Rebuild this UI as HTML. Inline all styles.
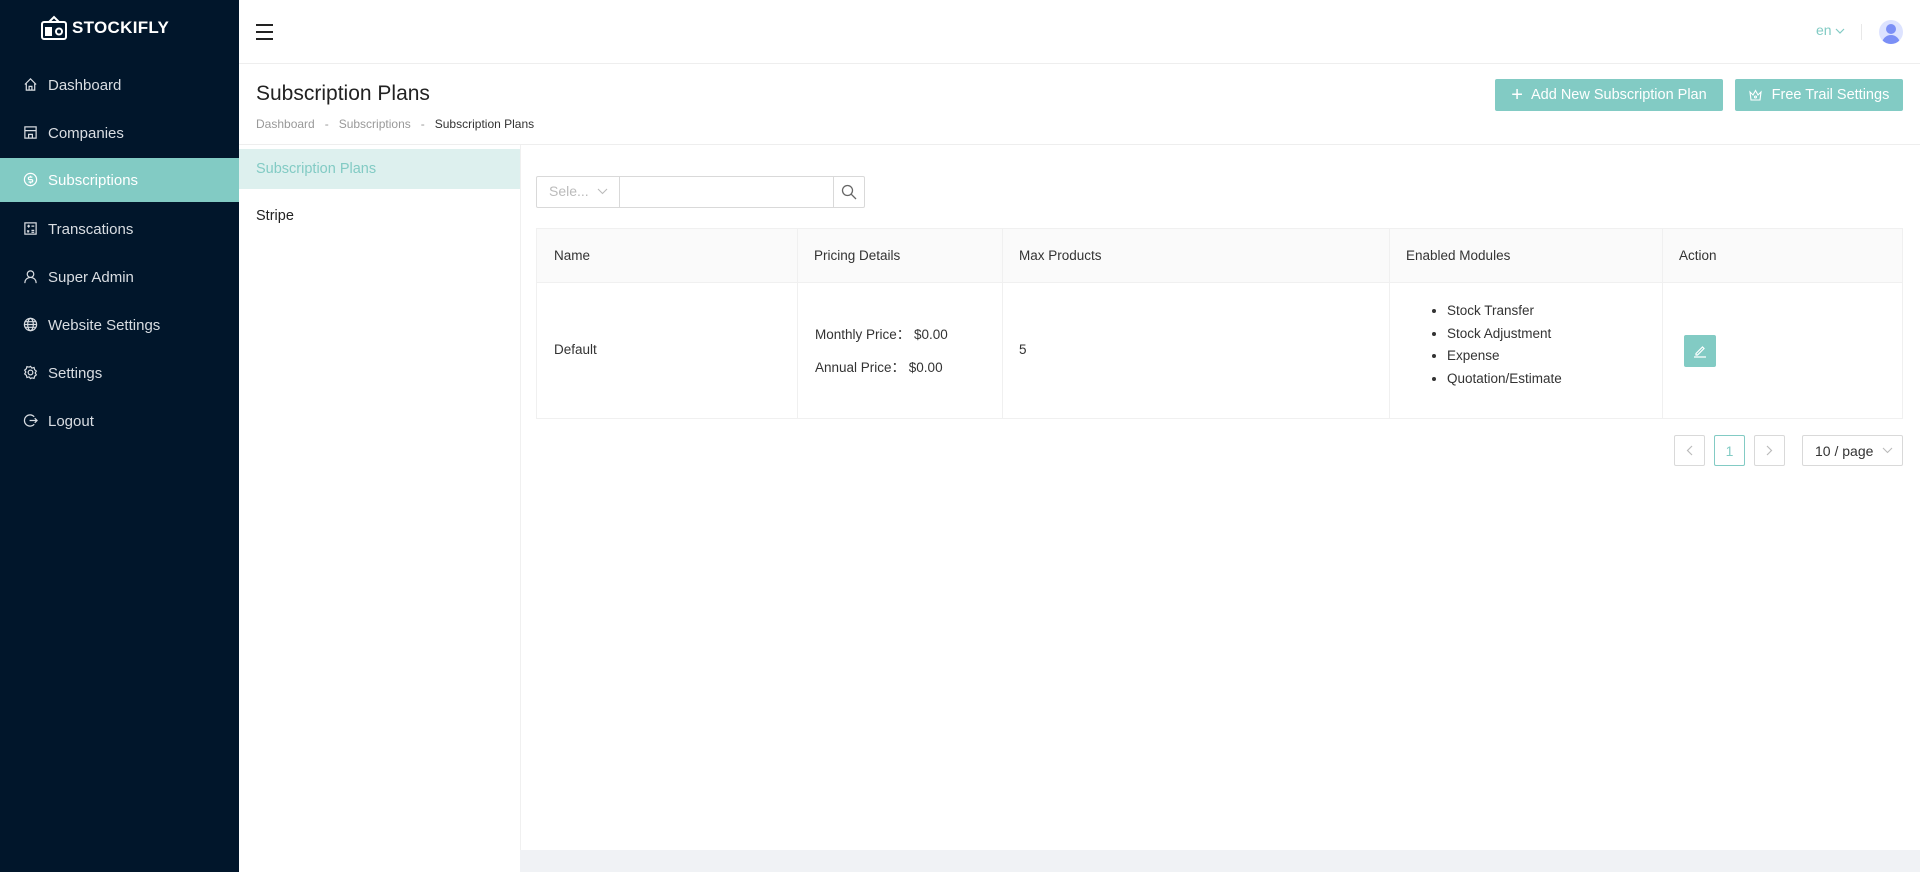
<!DOCTYPE html>
<html><head><meta charset="utf-8"><style>
*{box-sizing:border-box;margin:0;padding:0}
body{width:1920px;height:872px;position:relative;overflow:hidden;font-family:"Liberation Sans",sans-serif;color:#333;background:#fff;font-size:14px}
.a{position:absolute}
#sb{left:0;top:0;width:239px;height:872px;background:#01162b}
.mi{position:absolute;left:0;width:239px;height:46px;color:#d9dde2;font-size:15px;display:flex;align-items:center;padding-left:48px}
.mi svg{position:absolute;left:23px;top:15px}
.mi.act{background:#82cbc4;color:#fff}
.th{position:absolute;top:0;height:54px;line-height:54px;color:#333;font-size:13.5px}
.td{position:absolute;color:#333;font-size:13.5px}
.pg{position:absolute;top:435px;height:31px;border:1px solid #d9d9d9;border-radius:2px;display:flex;align-items:center;justify-content:center;color:#999;font-size:14px}
</style></head><body>
<div id="sb" class="a">
 <div class="a" style="left:40px;top:15px;width:28px;height:26px">
  <svg width="28" height="26" viewBox="0 0 28 26" fill="none" stroke="#fff" stroke-width="2"><rect x="2" y="7" width="24" height="17" rx="2"/><path d="M9 7l5-5 5 5"/><rect x="6" y="13" width="5" height="7" fill="#fff"/><circle cx="19" cy="16.5" r="3"/></svg>
 </div>
 <div class="a" style="left:72px;top:18px;color:#fff;font-weight:bold;font-size:17px;letter-spacing:0.3px">STOCKIFLY</div>
 <div class="mi" style="top:62px"><svg width="15" height="15" viewBox="0 0 16 16" fill="none" stroke="#d9dde2" stroke-width="1.3"><path d="M2 8L8 2l6 6M3.5 7v7h9V7M6.5 14v-4h3v4"/></svg>Dashboard</div>
 <div class="mi" style="top:110px"><svg width="15" height="15" viewBox="0 0 16 16" fill="none" stroke="#d9dde2" stroke-width="1.3"><rect x="2" y="2" width="12" height="12"/><path d="M2 6h12M6 14v-4h4v4"/></svg>Companies</div>
 <div class="mi act" style="top:158px;height:44px"><svg width="15" height="15" viewBox="0 0 16 16" fill="none" stroke="#fff" stroke-width="1.3" style="top:14px"><circle cx="8" cy="8" r="6.5"/><path d="M10 5.5H7a1.3 1.3 0 000 2.6h2a1.3 1.3 0 010 2.6H6M8 4v1.5M8 10.7v1.5"/></svg>Subscriptions</div>
 <div class="mi" style="top:206px"><svg width="15" height="15" viewBox="0 0 16 16" fill="none" stroke="#d9dde2" stroke-width="1.3"><rect x="2" y="2" width="12" height="12"/><path d="M4.5 5.5h3M6 4v3M9 5.5h3M4.5 10l2 2M6.5 10l-2 2M9 10h3M9 12h3"/></svg>Transcations</div>
 <div class="mi" style="top:254px"><svg width="15" height="15" viewBox="0 0 16 16" fill="none" stroke="#d9dde2" stroke-width="1.3"><circle cx="8" cy="5.5" r="3.5"/><path d="M2 15c0-4 3-6 6-6s6 2 6 6"/></svg>Super Admin</div>
 <div class="mi" style="top:302px"><svg width="15" height="15" viewBox="0 0 16 16" fill="none" stroke="#d9dde2" stroke-width="1.3"><circle cx="8" cy="8" r="6.5"/><ellipse cx="8" cy="8" rx="3" ry="6.5"/><path d="M1.5 8h13M2.5 5h11M2.5 11h11"/></svg>Website Settings</div>
 <div class="mi" style="top:350px"><svg width="15" height="15" viewBox="0 0 16 16" fill="none" stroke="#d9dde2" stroke-width="1.3"><circle cx="8" cy="8" r="2.5"/><path d="M8 1.5l1.5 1.8 2.3-.6.6 2.3 1.8 1.5-1.2 2 1.2 2-1.8 1.5-.6 2.3-2.3-.6L8 14.5l-1.5-1.8-2.3.6-.6-2.3L1.8 9.5 3 7.5 1.8 5.5l1.8-1.5.6-2.3 2.3.6z"/></svg>Settings</div>
 <div class="mi" style="top:398px"><svg width="15" height="15" viewBox="0 0 16 16" fill="none" stroke="#d9dde2" stroke-width="1.3"><path d="M12 4a6 6 0 100 8M7 8h8M12.5 5.5L15 8l-2.5 2.5"/></svg>Logout</div>
</div>
<div class="a" style="left:239px;top:0;width:1681px;height:64px;border-bottom:1px solid #eee"></div>
<div class="a" style="left:256px;top:24px;width:17px;height:2px;background:#222"></div>
<div class="a" style="left:256px;top:31px;width:17px;height:2px;background:#222"></div>
<div class="a" style="left:256px;top:38px;width:17px;height:2px;background:#222"></div>
<div class="a" style="left:1816px;top:22px;color:#82cbc4;font-size:14px">en <svg width="10" height="7" viewBox="0 0 10 7" fill="none" stroke="#82cbc4" stroke-width="1.2"><path d="M1 1l4 4 4-4"/></svg></div>
<div class="a" style="left:1861px;top:24px;width:1px;height:16px;background:#e8e8e8"></div>
<div class="a" style="left:1879px;top:20px;width:24px;height:24px;border-radius:50%;background:#dde3ff;overflow:hidden"><div class="a" style="left:7px;top:4px;width:10px;height:10px;border-radius:50%;background:#7b8ff6"></div><div class="a" style="left:3px;top:15px;width:18px;height:12px;border-radius:9px 9px 0 0;background:#7b8ff6"></div></div>
<div class="a" style="left:256px;top:82px;font-size:21px;color:#222">Subscription Plans</div>
<div class="a" style="left:256px;top:117px;font-size:12px;color:#999">Dashboard &nbsp;&nbsp;-&nbsp;&nbsp; Subscriptions &nbsp;&nbsp;-&nbsp;&nbsp; <span style="color:#333">Subscription Plans</span></div>
<div class="a" style="left:1495px;top:79px;width:228px;height:32px;background:#82cbc4;border-radius:2px;color:#fff;font-size:14.5px;display:flex;align-items:center;justify-content:center;gap:8px"><span style="font-size:20px;line-height:1">+</span>Add New Subscription Plan</div>
<div class="a" style="left:1735px;top:79px;width:168px;height:32px;background:#82cbc4;border-radius:2px;color:#fff;font-size:14.5px;display:flex;align-items:center;justify-content:center;gap:10px"><svg width="13" height="12" viewBox="0 0 13 12" fill="none" stroke="#fff" stroke-width="1.1"><path d="M1 3l3 3 2.5-4.5L9 6l3-3-1 8H2z"/><circle cx="6.5" cy="8" r="1"/></svg>Free Trail Settings</div>
<div class="a" style="left:239px;top:144px;width:1681px;height:1px;background:#eee"></div>
<div class="a" style="left:239px;top:149px;width:281px;height:40px;background:#ddf0ee;color:#82cbc4;font-size:14.5px;line-height:40px;padding-left:17px">Subscription Plans</div>
<div class="a" style="left:256px;top:208px;font-size:14.5px;color:#222">Stripe</div>
<div class="a" style="left:520px;top:145px;width:1px;height:705px;background:#f0f0f0"></div>
<div class="a" style="left:520px;top:850px;width:1400px;height:22px;background:#f0f2f5"></div>
<div class="a" style="left:536px;top:176px;width:329px;height:32px;border:1px solid #d9d9d9;border-radius:2px"></div>
<div class="a" style="left:619px;top:177px;width:1px;height:30px;background:#d9d9d9"></div>
<div class="a" style="left:833px;top:177px;width:1px;height:30px;background:#d9d9d9"></div>
<div class="a" style="left:549px;top:183px;color:#bbb;font-size:14px">Sele...</div>
<svg class="a" style="left:597px;top:188px" width="11" height="7" viewBox="0 0 11 7" fill="none" stroke="#bbb" stroke-width="1.1"><path d="M1 1l4.5 4.5L10 1"/></svg>
<svg class="a" style="left:841px;top:184px" width="16" height="16" viewBox="0 0 16 16" fill="none" stroke="#666" stroke-width="1.3"><circle cx="6.5" cy="6.5" r="5"/><path d="M10.2 10.2L15 15"/></svg>
<div class="a" style="left:536px;top:228px;width:1367px;height:191px;border:1px solid #f0f0f0">
 <div class="a" style="left:0;top:0;width:1365px;height:54px;background:#fafafa;border-bottom:1px solid #f0f0f0"></div>
 <div class="a" style="left:260px;top:0;width:1px;height:189px;background:#f0f0f0"></div>
 <div class="a" style="left:465px;top:0;width:1px;height:189px;background:#f0f0f0"></div>
 <div class="a" style="left:852px;top:0;width:1px;height:189px;background:#f0f0f0"></div>
 <div class="a" style="left:1125px;top:0;width:1px;height:189px;background:#f0f0f0"></div>
 <div class="th" style="left:17px">Name</div>
 <div class="th" style="left:277px">Pricing Details</div>
 <div class="th" style="left:482px">Max Products</div>
 <div class="th" style="left:869px">Enabled Modules</div>
 <div class="th" style="left:1142px">Action</div>
 <div class="td" style="left:17px;top:113px">Default</div>
 <div class="td" style="left:278px;top:94px">Monthly Price： $0.00</div>
 <div class="td" style="left:278px;top:127px">Annual Price： $0.00</div>
 <div class="td" style="left:482px;top:113px">5</div>
 <ul class="td" style="left:910px;top:71px;line-height:22.5px">
  <li>Stock Transfer</li><li>Stock Adjustment</li><li>Expense</li><li>Quotation/Estimate</li></ul>
 <div class="a" style="left:1147px;top:106px;width:32px;height:32px;background:#82cbc4;border-radius:2px"><svg class="a" style="left:9px;top:9px" width="14" height="14" viewBox="0 0 14 14" fill="none" stroke="#fff" stroke-width="1.2"><path d="M3 9.5L9.5 3l1.5 1.5L4.5 11H3zM1 13h12"/></svg></div>
</div>
<div class="pg" style="left:1674px;width:31px"><svg width="7" height="11" viewBox="0 0 7 11" fill="none" stroke="#bbb" stroke-width="1.2"><path d="M6 1L1.5 5.5 6 10"/></svg></div>
<div class="pg" style="left:1714px;width:31px;border-color:#82cbc4;color:#82cbc4">1</div>
<div class="pg" style="left:1754px;width:31px"><svg width="7" height="11" viewBox="0 0 7 11" fill="none" stroke="#bbb" stroke-width="1.2"><path d="M1 1l4.5 4.5L1 10"/></svg></div>
<div class="pg" style="left:1802px;width:101px;color:#333;justify-content:flex-start;padding-left:12px">10 / page<svg style="position:absolute;right:9px;top:11px" width="11" height="7" viewBox="0 0 11 7" fill="none" stroke="#bbb" stroke-width="1.1"><path d="M1 1l4.5 4.5L10 1"/></svg></div>
</body></html>
